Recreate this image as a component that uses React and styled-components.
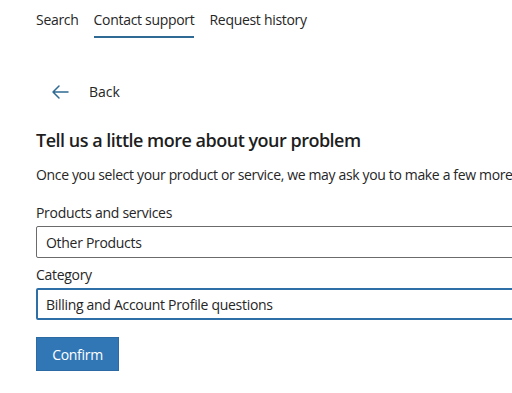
import styled, { createGlobalStyle } from "styled-components";

const GlobalStyle = createGlobalStyle`
  html, body {
    margin: 0;
    padding: 0;
    background: #ffffff;
    overflow: hidden;
  }
  body {
    font-family: "Open Sans", "Noto Sans", sans-serif;
    color: #262626;
  }
`;

const Page = styled.div`
  width: 640px;
  padding: 0 0 0 36px;
`;

const Tabs = styled.nav`
  display: flex;
  gap: 15px;
  height: 38px;
`;

const Tab = styled.a`
  display: flex;
  align-items: center;
  height: 38px;
  box-sizing: border-box;
  padding-top: 2px;
  font-size: 14px;
  color: #262626;
  text-decoration: none;
  border-bottom: 2px solid ${(p) => (p.$active ? "#2f6a94" : "transparent")};
  letter-spacing: -0.3px;
`;

const BackButton = styled.button`
  display: flex;
  align-items: center;
  gap: 20px;
  margin: 44px 0 0 15px;
  padding: 0;
  border: none;
  background: none;
  font-family: inherit;
  font-size: 14px;
  color: #262626;
  cursor: pointer;
`;

const Heading = styled.h2`
  margin: 27px 0 0;
  font-size: 18px;
  font-weight: 600;
  color: #1e1e1e;
  letter-spacing: -0.5px;
`;

const Intro = styled.p`
  margin: 13px 0 0;
  font-size: 14px;
  white-space: nowrap;
  letter-spacing: -0.35px;
`;

const Field = styled.div`
  display: flex;
  flex-direction: column;
  margin-top: ${(p) => p.$top}px;
`;

const Label = styled.label`
  font-size: 14px;
  line-height: 20px;
  margin-bottom: 3px;
  letter-spacing: -0.3px;
`;

const Select = styled.div`
  box-sizing: border-box;
  height: 32px;
  display: flex;
  align-items: center;
  padding-left: ${(p) => (p.$focused ? 8 : 9)}px;
  border: ${(p) => (p.$focused ? "2px solid #2f6fa8" : "1px solid #6b6b6b")};
  border-radius: 2px;
  font-size: 14px;
  color: #262626;
  letter-spacing: -0.3px;
`;

const Confirm = styled.button`
  margin-top: 17px;
  width: 83px;
  height: 34px;
  border: 1px solid #2b6aa3;
  background: #3277b5;
  color: #ffffff;
  font-family: inherit;
  font-size: 14px;
  border-radius: 0;
  letter-spacing: -0.3px;
`;

function ArrowLeft() {
  return (
    <svg width="18" height="16" viewBox="0 0 18 16" fill="none">
      <path
        d="M17 8H2M8 2L2 8l6 6"
        stroke="#2f6a94"
        strokeWidth="1.5"
        strokeLinecap="round"
        strokeLinejoin="round"
      />
    </svg>
  );
}

export default function App() {
  return (
    <Page>
      <GlobalStyle />
      <Tabs>
        <Tab>Search</Tab>
        <Tab $active>Contact support</Tab>
        <Tab>Request history</Tab>
      </Tabs>
      <BackButton>
        <ArrowLeft />
        Back
      </BackButton>
      <Heading>Tell us a little more about your problem</Heading>
      <Intro>
        Once you select your product or service, we may ask you to make a few more
      </Intro>
      <Field $top={19}>
        <Label>Products and services</Label>
        <Select>Other Products</Select>
      </Field>
      <Field $top={7}>
        <Label>Category</Label>
        <Select $focused>Billing and Account Profile questions</Select>
      </Field>
      <Confirm>Confirm</Confirm>
    </Page>
  );
}
